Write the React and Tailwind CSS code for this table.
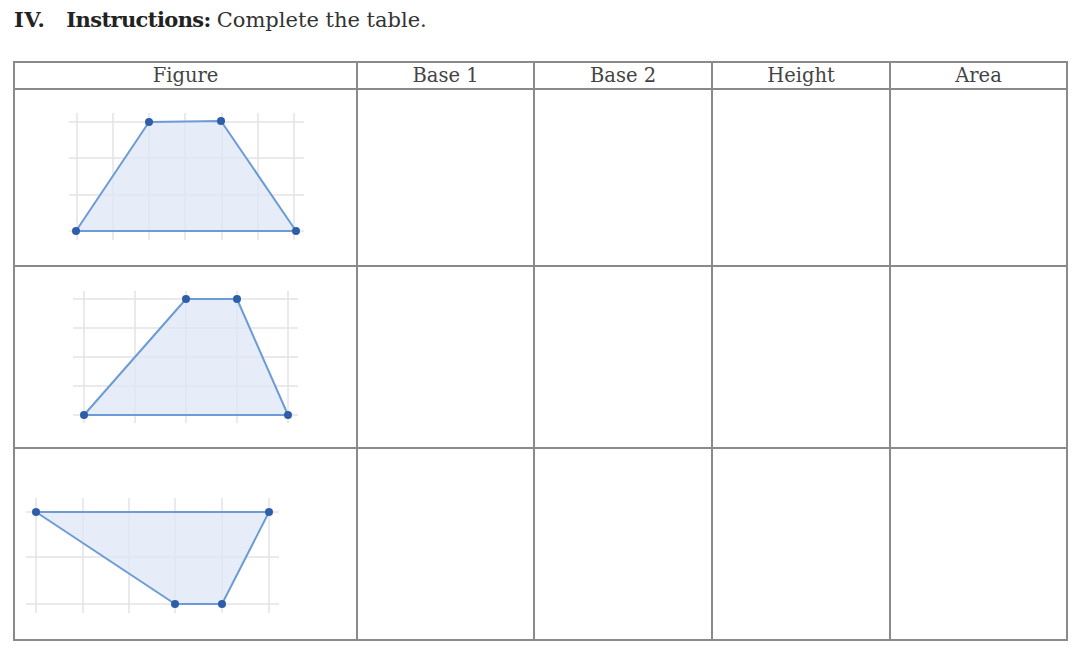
import React from 'react';

// grid drawing helper for the trapezoid figures
function Figure({ w, h, xs, ys, gx, gy, pts }) {
  return (
    <svg width={w} height={h} className="block">
      {xs.map((x) => (
        <line key={'v' + x} x1={x} y1={gy[0]} x2={x} y2={gy[1]} stroke="#e3e3e6" strokeWidth="1.5" />
      ))}
      {ys.map((y) => (
        <line key={'h' + y} x1={gx[0]} y1={y} x2={gx[1]} y2={y} stroke="#e3e3e6" strokeWidth="1.5" />
      ))}
      <polygon
        points={pts.map((p) => p.join(',')).join(' ')}
        fill="#dfe7f6"
        fillOpacity="0.75"
        stroke="#6c9bd6"
        strokeWidth="2"
        strokeLinejoin="round"
      />
      {pts.map((p, i) => (
        <circle key={i} cx={p[0]} cy={p[1]} r="4" fill="#2e5ea8" />
      ))}
    </svg>
  );
}

const cols = ['Base 1', 'Base 2', 'Height', 'Area'];

export default function App() {
  // coordinates are relative to the figure cell (cell starts at x=14)
  const rows = [
    {
      h: 'h-[177px]',
      fig: {
        w: 340, h: 175,
        xs: [62, 98, 134, 170, 207, 243, 279],
        ys: [32, 68, 105, 141],
        gx: [54, 289], gy: [23, 150],
        pts: [[61, 141], [134, 32], [206, 31], [281, 141]],
      },
    },
    {
      h: 'h-[182px]',
      fig: {
        w: 340, h: 180,
        xs: [69, 120, 171, 222, 273],
        ys: [32, 61, 90, 119, 148],
        gx: [58, 283], gy: [24, 156],
        pts: [[69, 148], [171, 32], [222, 32], [273, 148]],
      },
    },
    {
      h: 'h-[192px]',
      fig: {
        w: 340, h: 190,
        xs: [21, 68, 114, 160, 207, 254],
        ys: [63, 108, 155],
        gx: [11, 264], gy: [49, 164],
        pts: [[21, 63], [254, 63], [207, 155], [160, 155]],
      },
    },
  ];

  return (
    <div className="w-[1077px] h-[667px] bg-white overflow-hidden" style={{ fontFamily: '"DejaVu Serif", serif' }}>
      <div className="pl-[14px] pt-[4px] h-[61px] text-[21px] leading-[32px] text-[#333] whitespace-nowrap">
        <span className="font-bold text-[#222] tracking-[0.5px]">IV.</span>
        <span className="font-bold text-[#222] ml-[21px] tracking-[-0.6px]">Instructions:</span>
        <span className="ml-[6px]">Complete the table.</span>
      </div>
      <table className="ml-[13px] border-collapse table-fixed text-[19.5px] text-[#444]">
        <thead>
          <tr className="h-[27px]">
            <th className="w-[343px] border-2 border-[#8a8a8a] font-normal leading-none pt-[1px]">Figure</th>
            {cols.map((c, i) => (
              <th
                key={c}
                className={(i === 0 ? 'w-[177px]' : i === 3 ? 'w-[177px]' : 'w-[178px]') + ' border-2 border-[#8a8a8a] font-normal leading-none pt-[1px]'}
              >
                {c}
              </th>
            ))}
          </tr>
        </thead>
        <tbody>
          {rows.map((r, ri) => (
            <tr key={ri} className={r.h}>
              <td className="border-2 border-[#8a8a8a] p-0 align-top">
                <Figure {...r.fig} />
              </td>
              {cols.map((c) => (
                <td key={c} className="border-2 border-[#8a8a8a]" />
              ))}
            </tr>
          ))}
        </tbody>
      </table>
    </div>
  );
}
